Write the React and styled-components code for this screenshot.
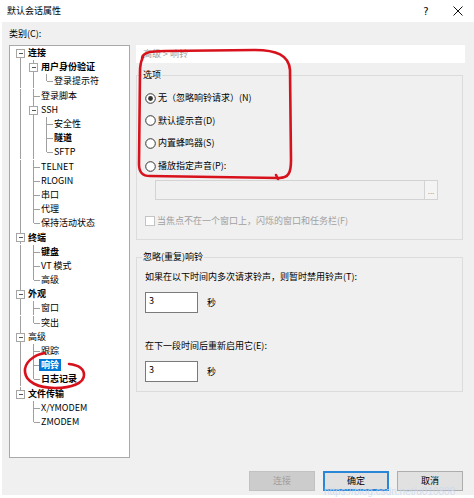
import React from "react";
import styled, { createGlobalStyle } from "styled-components";

const GlobalStyle = createGlobalStyle`
  html, body {
    margin: 0;
    padding: 0;
    background: #fff;
  }
  body {
    font-family: "Noto Sans CJK SC", "Noto Sans", sans-serif;
  }
`;

const ROW_H = 14.2;

const TREE = [
  { t: "连接", d: 0, exp: true, b: true },
  { t: "用户身份验证", d: 1, exp: true, b: true },
  { t: "登录提示符", d: 2 },
  { t: "登录脚本", d: 1 },
  { t: "SSH", d: 1, exp: true },
  { t: "安全性", d: 2 },
  { t: "隧道", d: 2, b: true },
  { t: "SFTP", d: 2 },
  { t: "TELNET", d: 1 },
  { t: "RLOGIN", d: 1 },
  { t: "串口", d: 1 },
  { t: "代理", d: 1 },
  { t: "保持活动状态", d: 1 },
  { t: "终端", d: 0, exp: true, b: true },
  { t: "键盘", d: 1, b: true },
  { t: "VT 模式", d: 1 },
  { t: "高级", d: 1 },
  { t: "外观", d: 0, exp: true, b: true },
  { t: "窗口", d: 1 },
  { t: "突出", d: 1 },
  { t: "高级", d: 0, exp: true },
  { t: "跟踪", d: 1 },
  { t: "响铃", d: 1, sel: true },
  { t: "日志记录", d: 1, b: true },
  { t: "文件传输", d: 0, exp: true, b: true },
  { t: "X/YMODEM", d: 1 },
  { t: "ZMODEM", d: 1 },
];

const RADIOS = [
  { label: "无（忽略响铃请求）(N)", checked: true },
  { label: "默认提示音(D)" },
  { label: "内置蜂鸣器(S)" },
  { label: "播放指定声音(P):" },
];

function hasNextSibling(i) {
  const d = TREE[i].d;
  for (let j = i + 1; j < TREE.length; j++) {
    if (TREE[j].d < d) return false;
    if (TREE[j].d === d) return true;
  }
  return false;
}

function hasPrevSibling(i) {
  const d = TREE[i].d;
  for (let j = i - 1; j >= 0; j--) {
    if (TREE[j].d < d) return false;
    if (TREE[j].d === d) return true;
  }
  return false;
}

function ancestorAt(i, k) {
  for (let j = i - 1; j >= 0; j--) {
    if (TREE[j].d === k) return j;
  }
  return -1;
}

const Window = styled.div`
  position: relative;
  width: 474px;
  height: 498px;
  display: flex;
  flex-direction: column;
  background: #fff;
  font-family: "Noto Sans CJK SC", "Noto Sans", sans-serif;
  font-size: 9px;
  color: #000;
  overflow: hidden;
`;

const TitleBar = styled.div`
  height: 22px;
  flex: none;
  display: flex;
  align-items: center;
  padding-left: 7px;
`;

const Title = styled.span`
  flex: 1;
  line-height: 12px;
`;

const TitleButton = styled.span`
  width: 32px;
  height: 22px;
  display: flex;
  align-items: center;
  justify-content: center;
  font-family: "DejaVu Sans", sans-serif;
  font-size: 10px;
`;

const Body = styled.div`
  flex: 1;
  display: flex;
  flex-direction: column;
  margin: 0 0 3px 2px;
  padding: 0 9px 0 7px;
  background: #f0f0f0;
`;

const CategoryLabel = styled.div`
  height: 23px;
  display: flex;
  align-items: center;
  line-height: 12px;
`;

const Main = styled.div`
  display: flex;
  gap: 6px;
  height: 413px;
`;

const Tree = styled.div`
  width: 121px;
  box-sizing: border-box;
  border: 1px solid #a9a9a9;
  background: #fff;
  overflow: hidden;
`;

const TreeRow = styled.div`
  height: ${ROW_H}px;
  display: flex;
  align-items: center;
`;

const TreeLabel = styled.span`
  line-height: 12px;
  white-space: nowrap;
  padding: ${(p) => (p.$selected ? "0 2px" : "0 1px")};
  margin-left: ${(p) => (p.$selected ? "-1px" : "0")};
  font-weight: ${(p) => (p.$bold || p.$selected ? 700 : 400)};
  background: ${(p) => (p.$selected ? "#0078d7" : "transparent")};
  color: ${(p) => (p.$selected ? "#fff" : "#000")};
`;

const Pane = styled.div`
  width: 329px;
  display: flex;
  flex-direction: column;
`;

const Breadcrumb = styled.div`
  height: 18px;
  display: flex;
  align-items: center;
  padding-left: 7px;
  background: #fff;
  color: #a0a0a0;
  line-height: 12px;
`;

const Group = styled.fieldset`
  margin: ${(p) => p.$top}px 2px 0 0;
  padding: 0 8px ${(p) => p.$bottom}px 8px;
  border: 1px solid #dcdcdc;
  min-width: 0;
`;

const Legend = styled.legend`
  margin-left: -3px;
  padding: 0 1px;
  line-height: 12px;
  font-size: 9px;
`;

const RadioList = styled.div`
  padding-top: 6px;
`;

const RadioRow = styled.div`
  height: 22.6px;
  display: flex;
  align-items: center;
  gap: 2px;
  line-height: 12px;
`;

const PathField = styled.div`
  margin: 3px 0 0 10px;
  width: 283px;
  height: 20px;
  box-sizing: border-box;
  border: 1px solid #d3d3d3;
  background: #f0f0f0;
  display: flex;
  justify-content: flex-end;
`;

const BrowseButton = styled.span`
  width: 12px;
  border-left: 1px solid #d3d3d3;
  background: #f4f4f4;
  color: #9a9a9a;
  font-size: 8px;
  display: flex;
  align-items: center;
  justify-content: center;
`;

const CheckRow = styled.div`
  margin-top: 14px;
  height: 14px;
  display: flex;
  align-items: center;
  gap: 2px;
  color: #a0a0a0;
  line-height: 12px;
`;

const CheckBox = styled.span`
  width: 10px;
  height: 10px;
  box-sizing: border-box;
  border: 1px solid #c4c4c4;
  background: #fff;
`;

const GroupText = styled.div`
  margin-top: ${(p) => p.$top}px;
  line-height: 12px;
`;

const SpinRow = styled.div`
  margin-top: 9px;
  display: flex;
  align-items: center;
  gap: 9px;
`;

const NumberBox = styled.div`
  width: 53px;
  height: 21px;
  box-sizing: border-box;
  border: 1px solid #7a7a7a;
  background: #fff;
  padding: 2px 3px;
  line-height: 12px;
`;

const Footer = styled.div`
  margin-top: 13px;
  padding-right: 2px;
  display: flex;
  justify-content: flex-end;
  gap: 8px;
`;

const Button = styled.div`
  width: 66px;
  height: 20px;
  box-sizing: border-box;
  display: flex;
  align-items: center;
  justify-content: center;
  line-height: 12px;
  background: ${(p) => (p.$disabled ? "#cccccc" : "#e1e1e1")};
  color: ${(p) => (p.$disabled ? "#9d9d9d" : "#000")};
  border: ${(p) =>
    p.$primary
      ? "2px solid #2c86d8"
      : p.$disabled
      ? "1px solid #c2c2c2"
      : "1px solid #adadad"};
`;

const Annotations = styled.svg`
  position: absolute;
  left: 0;
  top: 0;
  pointer-events: none;
`;

// faint blog watermark sitting over the bottom edge
const Watermark = styled.span`
  position: absolute;
  left: 324px;
  top: 486px;
  font-family: "Liberation Sans", sans-serif;
  font-size: 10px;
  line-height: 11px;
  color: rgba(200, 216, 238, 0.8);
  white-space: nowrap;
  pointer-events: none;
`;

function TreeGutter({ index }) {
  const row = TREE[index];
  const d = row.d;
  const width = 17 + 13 * d;
  const mid = ROW_H / 2;
  const lx = (k) => 10 + 13 * k + 0.5;
  const lines = [];

  for (let k = 0; k < d; k++) {
    const anc = ancestorAt(index, k);
    if (anc >= 0 && hasNextSibling(anc)) {
      lines.push(<line key={"a" + k} x1={lx(k)} y1={0} x2={lx(k)} y2={ROW_H} />);
    }
  }
  if (d > 0 || hasPrevSibling(index)) {
    lines.push(<line key="top" x1={lx(d)} y1={0} x2={lx(d)} y2={mid} />);
  }
  if (hasNextSibling(index)) {
    lines.push(<line key="bot" x1={lx(d)} y1={mid} x2={lx(d)} y2={ROW_H} />);
  }
  if (!row.exp) {
    lines.push(<line key="stub" x1={lx(d)} y1={mid} x2={lx(d) + 6} y2={mid} />);
  }

  return (
    <svg width={width} height={ROW_H} style={{ flex: "none" }} shapeRendering="crispEdges">
      <g stroke="#a0a0a0" strokeWidth="1">{lines}</g>
      {row.exp && (
        <g>
          <rect x={lx(d) - 4} y={mid - 4} width="8" height="8" fill="#fff" stroke="#a6a6a6" />
          <line x1={lx(d) - 2} y1={mid} x2={lx(d) + 2.5} y2={mid} stroke="#555" />
        </g>
      )}
    </svg>
  );
}

function RadioIcon({ checked }) {
  return (
    <svg width="11" height="11" viewBox="0 0 11 11" style={{ flex: "none" }}>
      <circle cx="5.5" cy="5.5" r="4.8" fill="#fff" stroke="#333" strokeWidth="1" />
      {checked && <circle cx="5.5" cy="5.5" r="2.4" fill="#333" />}
    </svg>
  );
}

export default function App() {
  return (
    <>
      <GlobalStyle />
      <Window>
        <TitleBar>
          <Title>默认会话属性</Title>
          <TitleButton>?</TitleButton>
          <TitleButton>
            <svg width="10" height="10" viewBox="0 0 10 10">
              <path d="M0.5 0.5 L9.5 9.5 M9.5 0.5 L0.5 9.5" stroke="#111" strokeWidth="1" />
            </svg>
          </TitleButton>
        </TitleBar>
        <Body>
          <CategoryLabel>类别(C):</CategoryLabel>
          <Main>
            <Tree>
              {TREE.map((row, i) => (
                <TreeRow key={i}>
                  <TreeGutter index={i} />
                  <TreeLabel $bold={row.b} $selected={row.sel}>
                    {row.t}
                  </TreeLabel>
                </TreeRow>
              ))}
            </Tree>
            <Pane>
              <Breadcrumb>高级 &gt; 响铃</Breadcrumb>
              <Group $top={6} $bottom={11}>
                <Legend>选项</Legend>
                <RadioList>
                  {RADIOS.map((r) => (
                    <RadioRow key={r.label}>
                      <RadioIcon checked={r.checked} />
                      <span>{r.label}</span>
                    </RadioRow>
                  ))}
                </RadioList>
                <PathField>
                  <BrowseButton>...</BrowseButton>
                </PathField>
                <CheckRow>
                  <CheckBox />
                  <span>当焦点不在一个窗口上，闪烁的窗口和任务栏(F)</span>
                </CheckRow>
              </Group>
              <Group $top={11} $bottom={9}>
                <Legend>忽略(重复)响铃</Legend>
                <GroupText $top={8}>如果在以下时间内多次请求铃声，则暂时禁用铃声(T):</GroupText>
                <SpinRow>
                  <NumberBox>3</NumberBox>
                  <span>秒</span>
                </SpinRow>
                <GroupText $top={27}>在下一段时间后重新启用它(E):</GroupText>
                <SpinRow>
                  <NumberBox>3</NumberBox>
                  <span>秒</span>
                </SpinRow>
              </Group>
            </Pane>
          </Main>
          <Footer>
            <Button $disabled>连接</Button>
            <Button $primary>确定</Button>
            <Button>取消</Button>
          </Footer>
        </Body>
        <Watermark>https://blog.csdn.net/u010808</Watermark>
        <Annotations width="474" height="498" viewBox="0 0 474 498">
          <g fill="none" stroke="#d8121c" strokeWidth="2.6" strokeLinecap="round" strokeLinejoin="round">
            <path d="M142 60 C141 53 149 51 165 51 L255 50 C276 50 289 55 290 70 L291 160 C291 172 289 178 279 178 L150 176 C142 176 139 172 139 164 L140 72 C140 64 141 61 143 57" />
            <path d="M276 175 L278 179" />
            <path d="M45 353 C33 355 24 363 25 372 C26 382 38 388 55 388 C72 388 84 383 84 375 C84 368 78 365 69 364" />
          </g>
        </Annotations>
      </Window>
    </>
  );
}
